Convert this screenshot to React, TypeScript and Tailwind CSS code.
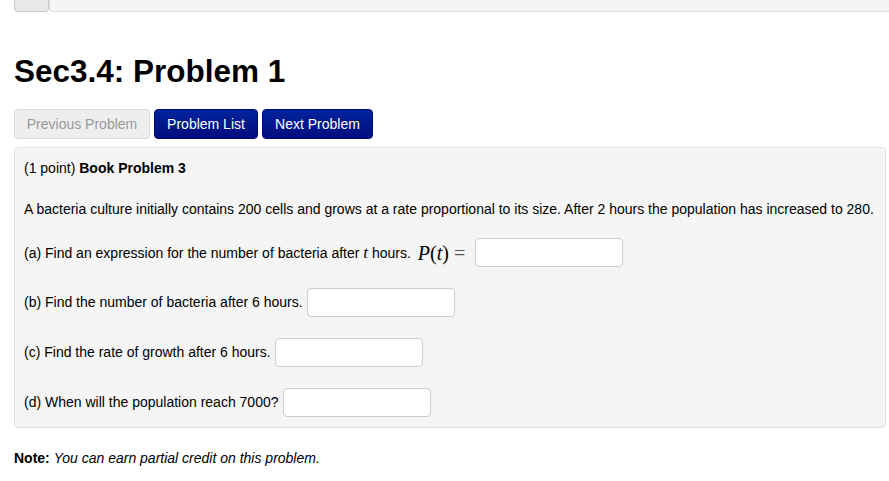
import React from 'react';

const sans = { fontFamily: '"Liberation Sans", Arial, sans-serif' };
const serif = { fontFamily: '"Liberation Serif", "Times New Roman", serif' };

function AnswerBox() {
  return (
    <input
      type="text"
      className="h-[29px] w-[148px] shrink-0 rounded-[4px] border border-[#ccc] bg-white px-2 text-[14px] outline-none"
    />
  );
}

export default function App() {
  return (
    <div className="min-h-[481px] bg-white text-black" style={sans}>
      {/* top bar */}
      <div className="flex h-[12px] pl-[14px]">
        <div className="h-[12px] w-[35px] rounded-b-[4px] border border-t-0 border-[#c8c8c8] bg-[#e8e8e8]" />
        <div className="h-[12px] flex-1 rounded-bl-[4px] border-b border-l border-[#e0e0e0] bg-[#f5f5f5]" />
      </div>

      <div className="px-[14px]">
        <h1 className="mt-[41px] text-[31.5px] font-bold leading-[36px]">Sec3.4: Problem 1</h1>

        {/* nav buttons */}
        <div className="mt-[20px] flex gap-[4px]">
          <button className="h-[30px] w-[136px] rounded-[4px] border border-[#dcdcdc] bg-[#eeeeee] text-[14px] text-[#999]">
            Previous Problem
          </button>
          <button className="h-[30px] w-[104px] rounded-[4px] border border-[#000a6e] bg-gradient-to-b from-[#00239c] to-[#000c7e] text-[14px] text-white">
            Problem List
          </button>
          <button className="h-[30px] w-[111px] rounded-[4px] border border-[#000a6e] bg-gradient-to-b from-[#00239c] to-[#000c7e] text-[14px] text-white">
            Next Problem
          </button>
        </div>

        {/* problem box */}
        <div className="mt-[8px] mr-[-11px] rounded-[4px] border border-[#e0e0e0] bg-[#f5f5f5] px-[9px] pt-[10px] pb-[10px] text-[14px]">
          <p className="leading-[20px]">
            (1 point) <b>Book Problem 3</b>
          </p>
          <p className="mt-[21px] leading-[20px]">
            A bacteria culture initially contains 200 cells and grows at a rate proportional to its size. After 2 hours the population has increased to 280.
          </p>
          <div className="mt-[19px] flex h-[29px] items-center">
            <span className="whitespace-nowrap">
              (a) Find an expression for the number of bacteria after{' '}
              <i className="text-[17px]" style={serif}>t</i> hours.
            </span>
            <span className="ml-[7px] whitespace-nowrap text-[20px]" style={serif}>
              <i>P</i>(<i>t</i>)
            </span>
            <span className="ml-[5px] mr-[10px] text-[20px] text-[#555]" style={serif}>=</span>
            <AnswerBox />
          </div>
          <div className="mt-[21px] flex h-[29px] items-center gap-[4px]">
            <span>(b) Find the number of bacteria after 6 hours.</span>
            <AnswerBox />
          </div>
          <div className="mt-[21px] flex h-[29px] items-center gap-[4px]">
            <span>(c) Find the rate of growth after 6 hours.</span>
            <AnswerBox />
          </div>
          <div className="mt-[21px] flex h-[29px] items-center gap-[4px]">
            <span>(d) When will the population reach 7000?</span>
            <AnswerBox />
          </div>
        </div>

        <p className="mt-[20px] text-[14px] leading-[20px]">
          <b>Note:</b> <i>You can earn partial credit on this problem.</i>
        </p>
      </div>
    </div>
  );
}
